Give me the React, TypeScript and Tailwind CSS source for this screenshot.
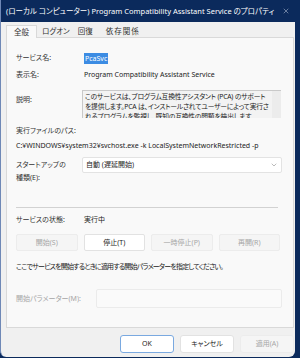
import { ChevronDown, X } from 'lucide-react';

const font = "[font-family:'Noto_Sans','Noto_Sans_CJK_JP',sans-serif] [font-feature-settings:'palt']";

const Label = ({ children }: { children: React.ReactNode }) => (
  <div className="w-[68px] shrink-0 text-[#333]">{children}</div>
);

export default function App() {
  return (
    <div className={`w-[300px] h-[358px] bg-[#0b2a5c] overflow-hidden text-[7px] leading-[10px] ${font}`}>
      <div className="w-[295px] h-[357px] flex flex-col bg-[#f0f0f0] border-l border-[#6f88b6] rounded-b-[6px] overflow-hidden">
        {/* title bar */}
        <div className="h-[22px] bg-[#0b2a5c] text-white flex items-center justify-between pl-[5px] pr-[5px] text-[7.5px]">
          <span>(ローカル コンピューター) Program Compatibility Assistant Service のプロパティ</span>
          <X className="w-[8px] h-[8px] text-[#c8d2e4]" strokeWidth={1.5} />
        </div>

        {/* tabs */}
        <div className="h-[15px] flex items-end pl-[5px] text-[#333] text-[7.5px]">
          <div className="h-[13px] w-[31px] bg-[#f9f9f9] border border-b-0 border-[#d9d9d9] flex items-center justify-center relative top-[1px]">全般</div>
          <div className="h-[13px] flex items-center ml-[5px]">ログオン</div>
          <div className="h-[13px] flex items-center ml-[8px]">回復</div>
          <div className="h-[13px] flex items-center ml-[13px] tracking-[1px]">依存関係</div>
        </div>

        {/* tab page */}
        <div className="ml-[5px] w-[288px] h-[291px] bg-[#f9f9f9] border border-[#d9d9d9] pl-[9px] pr-[12px] pt-[13px] flex flex-col">
          <div className="h-[14px] flex items-center">
            <Label>サービス名:</Label>
            <span className="bg-[#3c8ce3] text-white px-[1px] h-[11px] leading-[11px]">PcaSvc</span>
          </div>
          <div className="h-[14px] mt-[3px] flex items-center">
            <Label>表示名:</Label>
            <span className="text-[#222]">Program Compatibility Assistant Service</span>
          </div>
          <div className="h-[28px] mt-[8px] flex">
            <div className="w-[66px] shrink-0 text-[#333] pt-[5px]">説明:</div>
            <div className="flex-1 flex border-t border-l border-[#c9c9c9] bg-[#f3f3f3] overflow-hidden">
              <div className="flex-1 pl-[2px] pt-[1px] text-[#222] leading-[10px] text-[6.8px] tracking-[-0.2px] whitespace-nowrap overflow-hidden">
                <div>このサービスは、プログラム互換性アシスタント (PCA) のサポート</div>
                <div>を提供します。PCA は、インストールされてユーザーによって実行さ</div>
                <div>れるプログラムを監視し、既知の互換性の問題を検出します</div>
              </div>
              <div className="w-[9px] bg-[#ececec]" />
            </div>
          </div>
          <div className="h-[14px] mt-[6px] flex items-center text-[#333]">実行ファイルのパス:</div>
          <div className="h-[14px] mt-[1px] flex items-center text-[#222] whitespace-nowrap">
            C:¥WINDOWS¥system32¥svchost.exe -k LocalSystemNetworkRestricted -p
          </div>
          <div className="mt-[4px] flex">
            <div className="w-[66px] shrink-0 text-[#333] leading-[13px] pt-[1px]">
              <div>スタートアップの</div>
              <div>種類(E):</div>
            </div>
            <div className="flex-1 mr-[-1px] h-[16px] bg-white border border-[#e3e3e3] rounded-[2px] flex items-center justify-between pl-[3px] pr-[3px] text-[#222]">
              <span>自動 (遅延開始)</span>
              <ChevronDown className="w-[8px] h-[8px] text-[#777]" strokeWidth={1.5} />
            </div>
          </div>

          <div className="mt-[23px] h-px bg-[#d2d2d2] mr-[3px]" />

          <div className="h-[14px] mt-[5px] flex items-center">
            <Label>サービスの状態:</Label>
            <span className="text-[#222]">実行中</span>
          </div>

          <div className="mt-[7px] grid grid-cols-4 gap-[6px] mr-[1px]">
            <div className="h-[17px] rounded-[2px] bg-[#f5f5f5] border border-[#ececec] flex items-center justify-center text-[#a6a6a6]">開始(S)</div>
            <div className="h-[17px] rounded-[2px] bg-white border border-[#e2e2e2] flex items-center justify-center text-[#222]">停止(T)</div>
            <div className="h-[17px] rounded-[2px] bg-[#f5f5f5] border border-[#ececec] flex items-center justify-center text-[#a6a6a6]">一時停止(P)</div>
            <div className="h-[17px] rounded-[2px] bg-[#f5f5f5] border border-[#ececec] flex items-center justify-center text-[#a6a6a6]">再開(R)</div>
          </div>

          <div className="h-[14px] mt-[9px] flex items-center text-[#222] whitespace-nowrap tracking-[-0.8px]">
            ここでサービスを開始するときに適用する開始パラメーターを指定してください。
          </div>

          <div className="mt-[15px] h-[19px] flex items-center">
            <div className="w-[80px] shrink-0 text-[#a6a6a6]">開始パラメーター(M):</div>
            <div className="flex-1 h-[19px] mr-[-1px] bg-[#fafafa] border border-[#ebebeb] rounded-[2px]" />
          </div>
        </div>

        {/* dialog buttons */}
        <div className="mt-[7px] flex justify-end gap-[6px] pr-[1px]">
          <div className="w-[54px] h-[18px] rounded-[3px] bg-white border border-[#7aa9e0] flex items-center justify-center text-[#222]">OK</div>
          <div className="w-[54px] h-[18px] rounded-[3px] bg-white border border-[#e2e2e2] flex items-center justify-center text-[#222]">キャンセル</div>
          <div className="w-[54px] h-[18px] rounded-[3px] bg-[#f5f5f5] border border-[#ececec] flex items-center justify-center text-[#a6a6a6]">適用(A)</div>
        </div>
      </div>
    </div>
  );
}
